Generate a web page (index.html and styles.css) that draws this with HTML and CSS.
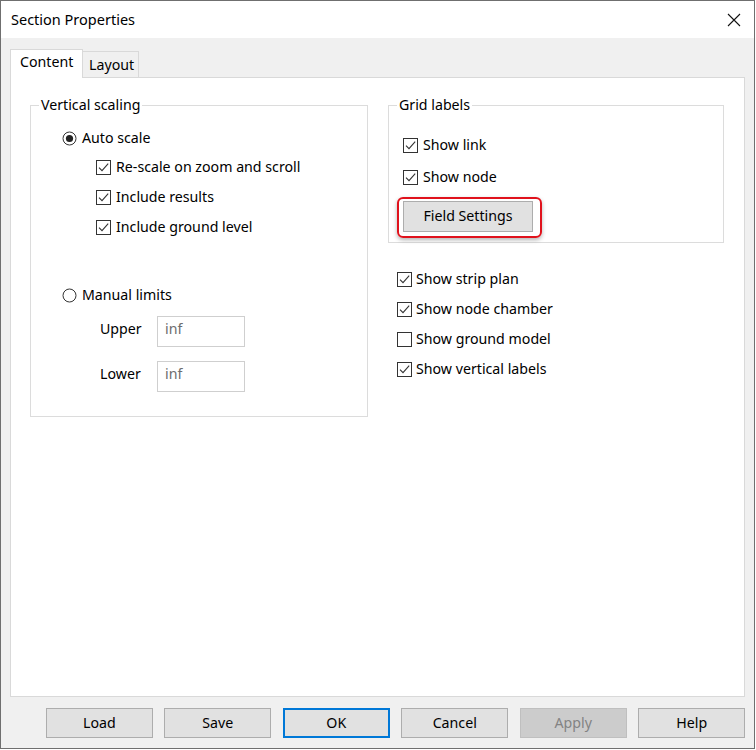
FILE: index.html
```html
<!DOCTYPE html>
<html lang="en">
<head>
<meta charset="UTF-8">
<title>Section Properties</title>
<link rel="stylesheet" href="styles.css">
</head>
<body>
<div class="window">
    <div class="titlebar">
        <span class="title">Section Properties</span>
        <svg class="close" width="14" height="14" viewBox="0 0 14 14"><path d="M1 1L13 13M13 1L1 13" stroke="#111" stroke-width="1.1"/></svg>
    </div>
    <div class="client">
        <div class="tabs">
            <div class="tab active">Content</div>
            <div class="tab">Layout</div>
        </div>
        <div class="panel">
            <fieldset class="group group-left">
                <legend>Vertical scaling</legend>
                <div class="group-body">
                    <div class="row radio-row first">
                        <svg class="radio" width="15" height="15" viewBox="0 0 15 15"><circle cx="7.5" cy="7.5" r="6.5" fill="#fff" stroke="#333"/><circle cx="7.5" cy="7.5" r="3.6" fill="#222"/></svg>
                        <span>Auto scale</span>
                    </div>
                    <div class="row check-row sub">
                        <svg class="chk" width="15" height="15" viewBox="0 0 15 15"><rect x="0.5" y="0.5" width="14" height="14" fill="#fff" stroke="#333"/><path d="M3 7.6L6 10.6L12.2 3.6" fill="none" stroke="#333" stroke-width="1.1"/></svg>
                        <span>Re-scale on zoom and scroll</span>
                    </div>
                    <div class="row check-row sub">
                        <svg class="chk" width="15" height="15" viewBox="0 0 15 15"><rect x="0.5" y="0.5" width="14" height="14" fill="#fff" stroke="#333"/><path d="M3 7.6L6 10.6L12.2 3.6" fill="none" stroke="#333" stroke-width="1.1"/></svg>
                        <span>Include results</span>
                    </div>
                    <div class="row check-row sub">
                        <svg class="chk" width="15" height="15" viewBox="0 0 15 15"><rect x="0.5" y="0.5" width="14" height="14" fill="#fff" stroke="#333"/><path d="M3 7.6L6 10.6L12.2 3.6" fill="none" stroke="#333" stroke-width="1.1"/></svg>
                        <span>Include ground level</span>
                    </div>
                    <div class="row radio-row manual">
                        <svg class="radio" width="15" height="15" viewBox="0 0 15 15"><circle cx="7.5" cy="7.5" r="6.5" fill="#fff" stroke="#333"/></svg>
                        <span>Manual limits</span>
                    </div>
                    <div class="limit upper">
                        <span class="limit-label">Upper</span>
                        <div class="field">inf</div>
                    </div>
                    <div class="limit lower">
                        <span class="limit-label">Lower</span>
                        <div class="field">inf</div>
                    </div>
                </div>
            </fieldset>

            <div class="col-right">
                <fieldset class="group group-right">
                    <legend>Grid labels</legend>
                    <div class="group-body">
                        <div class="row grid-row first">
                            <svg class="chk" width="15" height="15" viewBox="0 0 15 15"><rect x="0.5" y="0.5" width="14" height="14" fill="#fff" stroke="#333"/><path d="M3 7.6L6 10.6L12.2 3.6" fill="none" stroke="#333" stroke-width="1.1"/></svg>
                            <span>Show link</span>
                        </div>
                        <div class="row grid-row">
                            <svg class="chk" width="15" height="15" viewBox="0 0 15 15"><rect x="0.5" y="0.5" width="14" height="14" fill="#fff" stroke="#333"/><path d="M3 7.6L6 10.6L12.2 3.6" fill="none" stroke="#333" stroke-width="1.1"/></svg>
                            <span>Show node</span>
                        </div>
                        <div class="highlight">
                            <button class="btn field-btn">Field Settings</button>
                        </div>
                    </div>
                </fieldset>
                <div class="options">
                    <div class="row opt-row">
                        <svg class="chk" width="15" height="15" viewBox="0 0 15 15"><rect x="0.5" y="0.5" width="14" height="14" fill="#fff" stroke="#333"/><path d="M3 7.6L6 10.6L12.2 3.6" fill="none" stroke="#333" stroke-width="1.1"/></svg>
                        <span>Show strip plan</span>
                    </div>
                    <div class="row opt-row">
                        <svg class="chk" width="15" height="15" viewBox="0 0 15 15"><rect x="0.5" y="0.5" width="14" height="14" fill="#fff" stroke="#333"/><path d="M3 7.6L6 10.6L12.2 3.6" fill="none" stroke="#333" stroke-width="1.1"/></svg>
                        <span>Show node chamber</span>
                    </div>
                    <div class="row opt-row">
                        <svg class="chk" width="15" height="15" viewBox="0 0 15 15"><rect x="0.5" y="0.5" width="14" height="14" fill="#fff" stroke="#333"/></svg>
                        <span>Show ground model</span>
                    </div>
                    <div class="row opt-row">
                        <svg class="chk" width="15" height="15" viewBox="0 0 15 15"><rect x="0.5" y="0.5" width="14" height="14" fill="#fff" stroke="#333"/><path d="M3 7.6L6 10.6L12.2 3.6" fill="none" stroke="#333" stroke-width="1.1"/></svg>
                        <span>Show vertical labels</span>
                    </div>
                </div>
            </div>
        </div>
        <div class="buttons">
            <button class="btn">Load</button>
            <button class="btn">Save</button>
            <button class="btn default">OK</button>
            <button class="btn">Cancel</button>
            <button class="btn disabled">Apply</button>
            <button class="btn">Help</button>
        </div>
    </div>
</div>
</body>
</html>
```
FILE: styles.css
```css
html,body{margin:0;padding:0;background:#fff;}
body{font:14.2px/1.3 "Noto Sans","Liberation Sans",sans-serif;color:#000;}

.window{width:755px;height:749px;box-sizing:border-box;border:1px solid #6f6f6f;display:flex;flex-direction:column;background:#f0f0f0;}

.titlebar{height:37px;flex:none;background:#fff;display:flex;align-items:center;justify-content:space-between;padding:0 13px 0 10px;}
.title{font-size:14.5px;color:#000;}
.close{display:block;}

.client{flex:1;display:flex;flex-direction:column;padding:11px 9px 10px 9px;}

.tabs{display:flex;align-items:flex-end;height:28px;flex:none;}
.tab{box-sizing:border-box;border:1px solid #d9d9d9;border-bottom:0;background:#f0f0f0;height:26px;padding:0 5px 0 6px;line-height:25px;}
.tab.active{position:relative;z-index:1;background:#fff;height:29px;margin-bottom:-1px;padding:0 9px 0 9px;line-height:24px;width:73px;}
.tab + .tab{border-left:0;width:56px;}

.panel{flex:1;background:#fff;border:1px solid #d9d9d9;display:grid;grid-template-columns:338px 336px;column-gap:20px;align-items:start;padding:18px 19px;}

.group{margin:0;padding:0;border:1px solid #dcdcdc;min-width:0;}
.group legend{margin-left:8px;padding:0 2px;line-height:18px;}

.group-left{height:321px;box-sizing:border-box;}
.group-left .group-body{padding-left:31px;}
.group-right .group-body{padding:0 0 10px 14px;}

.row{display:flex;align-items:center;}
.row span{margin-left:5px;}
.radio,.chk{display:block;flex:none;}

.radio-row.first{margin-top:10px;height:28px;}
.check-row{height:30px;}
.sub{padding-left:34px;}
.radio-row.manual{margin-top:38px;height:30px;}

.limit{display:flex;align-items:center;padding-left:38px;}
.limit.upper{margin-top:6px;}
.limit.lower{margin-top:14px;}
.limit-label{width:57px;margin-top:-4px;}
.field{box-sizing:border-box;width:88px;height:31px;border:1px solid #cfcfcf;color:#6d6d6d;padding:3px 0 0 7px;}

.grid-row{height:32px;}
.grid-row.first{margin-top:15px;}

.highlight{position:relative;display:inline-block;margin-top:8px;}
.highlight::after{content:"";position:absolute;top:-4px;left:-6px;right:-9px;bottom:-6px;border:2px solid #e0121c;border-radius:6px;box-shadow:0 2px 4px rgba(0,0,0,0.3);}

.btn{font:inherit;color:#000;background:#e1e1e1;border:1px solid #adadad;height:30px;padding:0;box-sizing:border-box;cursor:default;}
.field-btn{width:130px;height:31px;}

.options{padding-left:9px;margin-top:21px;}
.opt-row{height:30px;}
.opt-row span{margin-left:4px;}

.buttons{display:flex;gap:11.8px;padding-left:36px;margin-top:11px;flex:none;}
.buttons .btn{width:107px;}
.btn.default{border:2px solid #0078d7;}
.btn.disabled{background:#cccccc;border-color:#bfbfbf;color:#838383;}
```
